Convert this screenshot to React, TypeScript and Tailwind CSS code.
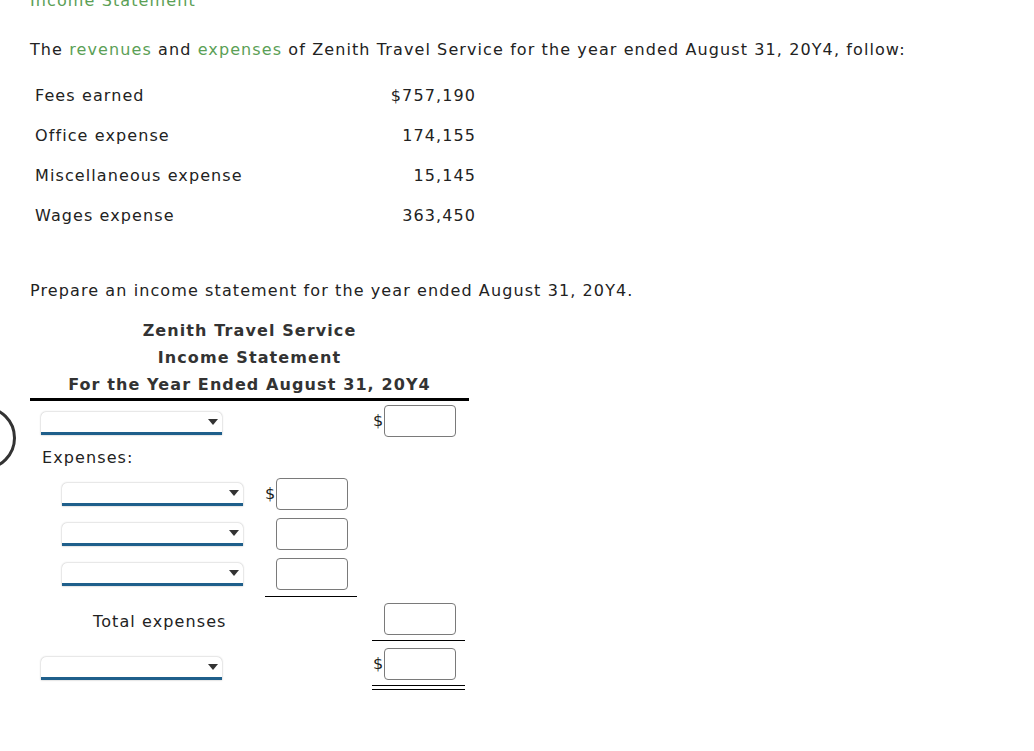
const rows = [
  { label: "Fees earned", value: "$757,190" },
  { label: "Office expense", value: "174,155" },
  { label: "Miscellaneous expense", value: "15,145" },
  { label: "Wages expense", value: "363,450" },
];

function Select({ width = "w-[181px]" }: { width?: string }) {
  return (
    <div
      className={`${width} relative h-[23px] rounded-t-[5px] bg-white shadow-[0_0_2px_rgba(0,0,0,0.35)] border-b-[3px] border-[#1f5f8b]`}
    >
      <span className="absolute right-[4px] top-[7px] h-0 w-0 border-x-[5px] border-t-[6px] border-x-transparent border-t-[#333]" />
    </div>
  );
}

function Box() {
  return <div className="h-[32px] w-[72px] rounded-[4px] border border-[#7a7a7a] bg-white" />;
}

function Dollar({ show }: { show?: boolean }) {
  return <span className={`w-[11px] text-[16px] tracking-normal ${show ? "" : "invisible"}`}>$</span>;
}

export default function App() {
  return (
    <div className="relative min-h-[751px] overflow-hidden bg-white pl-[30px] text-[#222] font-['DejaVu_Sans',Verdana,sans-serif] text-[16px] tracking-[1.1px]">
      {/* partly hidden radio ring at the left edge */}
      <div className="absolute left-[-48px] top-[406px] h-[64px] w-[64px] rounded-full border-[3px] border-[#333]" />

      <div className="mt-[-9px] leading-5 text-[#5ba056]">Income Statement</div>

      <p className="mt-[29px] leading-5">
        The <span className="text-[#5ba056]">revenues</span> and{" "}
        <span className="text-[#5ba056]">expenses</span> of Zenith Travel Service for the year ended August
        31, 20Y4, follow:
      </p>

      <div className="mt-[16px] w-[446px] pl-[5px]">
        {rows.map((r) => (
          <div key={r.label} className="flex h-[40px] items-center justify-between">
            <span>{r.label}</span>
            <span>{r.value}</span>
          </div>
        ))}
      </div>

      <p className="mt-[45px] leading-5">Prepare an income statement for the year ended August 31, 20Y4.</p>

      <div className="mt-[16px] w-[439px]">
        <div className="border-b-[3px] border-black text-center font-bold leading-[27px] text-[#333]">
          <div>Zenith Travel Service</div>
          <div>Income Statement</div>
          <div>For the Year Ended August 31, 20Y4</div>
        </div>

        {/* revenue row */}
        <div className="mt-[4px] flex items-center">
          <div className="ml-[11px] mt-[4px]">
            <Select />
          </div>
          <div className="ml-auto mr-[13px] flex items-center">
            <Dollar show />
            <Box />
          </div>
        </div>

        <div className="ml-[12px] mt-[11px] leading-5">Expenses:</div>

        {[true, false, false].map((d, i) => (
          <div key={i} className={`flex items-center ${i === 0 ? "mt-[10px]" : "mt-[8px]"}`}>
            <div className="ml-[32px]">
              <Select />
            </div>
            <div className="ml-[22px] flex items-center">
              <Dollar show={d} />
              <Box />
            </div>
          </div>
        ))}
        <div className="ml-[235px] mt-[6px] h-px w-[92px] bg-black" />

        <div className="mt-[6px] flex items-center">
          <div className="ml-[63px] mt-[5px]">Total expenses</div>
          <div className="ml-auto mr-[13px] flex items-center">
            <Dollar />
            <Box />
          </div>
        </div>
        <div className="ml-[342px] mt-[5px] h-px w-[93px] bg-black" />

        <div className="mt-[7px] flex items-center">
          <div className="ml-[11px] mt-[8px]">
            <Select />
          </div>
          <div className="ml-auto mr-[13px] flex items-center">
            <Dollar show />
            <Box />
          </div>
        </div>
        <div className="ml-[342px] mt-[5px] h-[5px] w-[93px] border-y border-black" />
      </div>
    </div>
  );
}
